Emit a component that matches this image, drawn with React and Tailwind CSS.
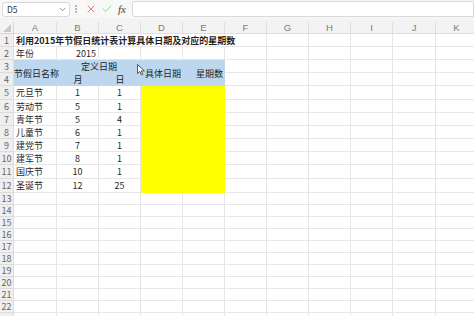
import { ChevronDown, X, Check, EllipsisVertical } from "lucide-react";

const COLS = ["A", "B", "C", "D", "E", "F", "G", "H", "I", "J", "K"];

const HOLIDAYS = [
  { n: 5, name: "元旦节", m: "1", d: "1", h: "h-[14px]" },
  { n: 6, name: "劳动节", m: "5", d: "1", h: "h-[13px]" },
  { n: 7, name: "青年节", m: "5", d: "4", h: "h-[13px]" },
  { n: 8, name: "儿童节", m: "6", d: "1", h: "h-[13px]" },
  { n: 9, name: "建党节", m: "7", d: "1", h: "h-[13px]" },
  { n: 10, name: "建军节", m: "8", d: "1", h: "h-[13px]" },
  { n: 11, name: "国庆节", m: "10", d: "1", h: "h-[14px]" },
  { n: 12, name: "圣诞节", m: "12", d: "25", h: "h-[14px]" },
];

const EMPTY_ROWS = [13, 14, 15, 16, 17, 18, 19, 20, 21, 22];

function RowHead({ n, className = "" }) {
  return (
    <div className={`w-[14px] shrink-0 bg-[#efefef] border-r border-b border-[#dcdcdc] flex items-center justify-center text-[9px] text-[#666] ${className}`}>
      {n}
    </div>
  );
}

function Cell({ w = "w-[42px]", className = "", children }) {
  return (
    <div className={`${w} shrink-0 h-full border-r border-b border-[#e6e6e6] flex items-center px-[2px] whitespace-nowrap ${className}`}>
      {children}
    </div>
  );
}

function blanks(from) {
  return COLS.slice(from).map((c) => <Cell key={c} w={c === "J" ? "w-[43px]" : "w-[42px]"} />);
}

export default function App() {
  return (
    <div className="relative w-[474px] h-[316px] overflow-hidden bg-white text-[#1f1f1f] font-['Noto_Sans_CJK_SC','Noto_Sans',sans-serif] text-[9px] leading-none">
      {/* formula bar */}
      <div className="h-[18px] flex items-center bg-[#f8f8f8]">
        <div className="ml-[2px] w-[68px] h-[15px] bg-white border border-[#d8d8d8] rounded-[3px] flex items-center justify-between pl-[4px] pr-[2px]">
          <span className="text-[8.5px] text-[#333]">D5</span>
          <ChevronDown size={9} className="text-[#666]" />
        </div>
        <EllipsisVertical size={10} className="ml-[1px] text-[#888]" />
        <X size={12} strokeWidth={1.6} className="ml-[4px] text-[#e05a55]" />
        <Check size={12} strokeWidth={1.6} className="ml-[4px] text-[#86c47f]" />
        <span className="ml-[5px] italic text-[11px] font-['Liberation_Serif',serif] text-[#444]">fx</span>
        <div className="ml-[6px] flex-1 h-[16px] bg-white border border-[#d8d8d8] rounded-l-[3px]" />
      </div>
      <div className="h-[4px] bg-[#f3f3f3]" />

      {/* column header */}
      <div className="flex h-[12px] bg-[#f3f3f3] text-[#7a7a7a] font-['Liberation_Sans',sans-serif] text-[9.5px]">
        <div className="w-[14px] shrink-0 relative border-r border-b border-[#d6d6d6]">
          <svg width="8" height="8" className="absolute right-[2px] bottom-[1px]">
            <polygon points="8,0 8,8 0,8" fill="#c9c9c9" />
          </svg>
        </div>
        {COLS.map((c, i) => (
          <div
            key={c}
            className={`${i === 0 || c === "J" ? "w-[43px]" : "w-[42px]"} shrink-0 flex items-center justify-center border-r border-b border-[#dedede]`}
          >
            {c}
          </div>
        ))}
      </div>

      {/* row 1 */}
      <div className="flex h-[13px]">
        <RowHead n="1" />
        <Cell w="w-[253px]" className="font-bold">利用2015年节假日统计表计算具体日期及对应的星期数</Cell>
        {blanks(6)}
      </div>

      {/* row 2 */}
      <div className="flex h-[13px]">
        <RowHead n="2" />
        <Cell w="w-[43px]">年份</Cell>
        <Cell className="justify-end">2015</Cell>
        {blanks(2)}
      </div>

      {/* rows 3-4 header block */}
      <div className="flex h-[26px]">
        <div className="flex flex-col">
          <RowHead n="3" className="h-[13px]" />
          <RowHead n="4" className="h-[13px]" />
        </div>
        <div className="flex w-[211px] shrink-0 bg-[#bdd7ee]">
          <div className="w-[43px] shrink-0 flex items-center whitespace-nowrap">节假日名称</div>
          <div className="w-[84px] shrink-0 flex flex-col">
            <div className="h-[13px] flex items-center justify-center">定义日期</div>
            <div className="h-[13px] flex">
              <div className="w-[42px] flex items-center justify-center">月</div>
              <div className="w-[42px] flex items-center justify-center">日</div>
            </div>
          </div>
          <div className="w-[42px] shrink-0 flex items-center justify-center pl-[2px]">具体日期</div>
          <div className="w-[42px] shrink-0 flex items-center justify-end pr-[2px]">星期数</div>
        </div>
        {COLS.slice(5).map((c) => (
          <div key={c} className={`${c === "J" ? "w-[43px]" : "w-[42px]"} shrink-0 flex flex-col`}>
            <div className="h-[13px] border-r border-b border-[#e6e6e6]" />
            <div className="h-[13px] border-r border-b border-[#e6e6e6]" />
          </div>
        ))}
      </div>

      {/* holiday rows */}
      {HOLIDAYS.map((r) => (
        <div key={r.n} className={`flex ${r.h}`}>
          <RowHead n={r.n} />
          <Cell w="w-[43px]">{r.name}</Cell>
          <Cell className="justify-center">{r.m}</Cell>
          <Cell className="justify-center">{r.d}</Cell>
          <div className="w-[84px] shrink-0 h-full bg-[#ffff00]" />
          {blanks(5)}
        </div>
      ))}

      {/* empty rows */}
      {EMPTY_ROWS.map((n) => (
        <div key={n} className="flex h-[12px]">
          <RowHead n={n} />
          <Cell w="w-[43px]" />
          {blanks(1)}
        </div>
      ))}
      <div className="flex h-[12px]">
        <RowHead n="" />
        <Cell w="w-[43px]" />
        {blanks(1)}
      </div>

      {/* mouse pointer */}
      <svg width="8" height="12" viewBox="0 0 8 12" className="absolute left-[137px] top-[64px]">
        <path d="M0.5 0.5 L0.5 9.5 L2.8 7.4 L4.4 11 L5.8 10.4 L4.3 6.9 L7.3 6.9 Z" fill="#fff" stroke="#333" strokeWidth="0.8" />
      </svg>
    </div>
  );
}
